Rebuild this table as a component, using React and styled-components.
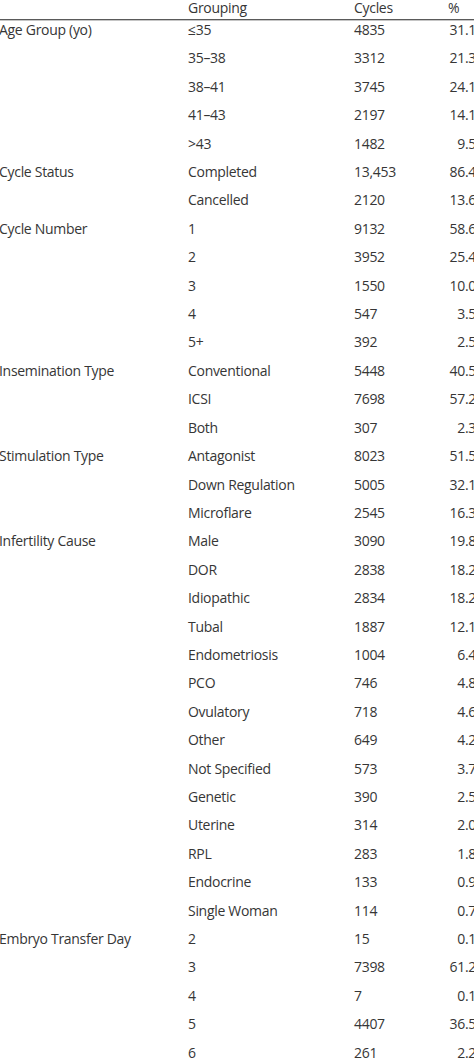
import React from "react";
import styled, { createGlobalStyle } from "styled-components";

const GlobalStyle = createGlobalStyle`
  html, body {
    margin: 0;
    padding: 0;
    background: #ffffff;
    overflow: hidden;
  }
  body {
    font-family: "Open Sans", "Noto Sans", "Liberation Sans", sans-serif;
    color: #363636;
  }
`;

const Table = styled.div`
  width: 476px;
  font-size: 14px;
  letter-spacing: -0.3px;
  font-weight: 400;
`;

const HeaderRow = styled.div`
  display: grid;
  grid-template-columns: 188px 166px 94px 28px;
  height: 19px;
  line-height: 16px;
  border-bottom: 1px solid #5a5a5a;
  box-shadow: 0 0.5px 0 #8a8a8a;
`;

const Row = styled.div`
  display: grid;
  grid-template-columns: 188px 166px 94px 28px;
  height: 28.42px;
  line-height: 20px;
`;

const Cell = styled.div`
  white-space: nowrap;
  text-align: ${(p) => (p.$right ? "right" : "left")};
  margin-left: ${(p) => (p.$label ? "-1px" : "0")};
`;

const groups = [
  ["Age Group (yo)", [["≤35", "4835", "31.1"], ["35–38", "3312", "21.3"], ["38–41", "3745", "24.1"], ["41–43", "2197", "14.1"], [">43", "1482", "9.5"]]],
  ["Cycle Status", [["Completed", "13,453", "86.4"], ["Cancelled", "2120", "13.6"]]],
  ["Cycle Number", [["1", "9132", "58.6"], ["2", "3952", "25.4"], ["3", "1550", "10.0"], ["4", "547", "3.5"], ["5+", "392", "2.5"]]],
  ["Insemination Type", [["Conventional", "5448", "40.5"], ["ICSI", "7698", "57.2"], ["Both", "307", "2.3"]]],
  ["Stimulation Type", [["Antagonist", "8023", "51.5"], ["Down Regulation", "5005", "32.1"], ["Microflare", "2545", "16.3"]]],
  ["Infertility Cause", [["Male", "3090", "19.8"], ["DOR", "2838", "18.2"], ["Idiopathic", "2834", "18.2"], ["Tubal", "1887", "12.1"], ["Endometriosis", "1004", "6.4"], ["PCO", "746", "4.8"], ["Ovulatory", "718", "4.6"], ["Other", "649", "4.2"], ["Not Specified", "573", "3.7"], ["Genetic", "390", "2.5"], ["Uterine", "314", "2.0"], ["RPL", "283", "1.8"], ["Endocrine", "133", "0.9"], ["Single Woman", "114", "0.7"]]],
  ["Embryo Transfer Day", [["2", "15", "0.1"], ["3", "7398", "61.2"], ["4", "7", "0.1"], ["5", "4407", "36.5"], ["6", "261", "2.2"]]],
];

export default function App() {
  return (
    <>
      <GlobalStyle />
      <Table>
        <HeaderRow>
          <Cell />
          <Cell>Grouping</Cell>
          <Cell>Cycles</Cell>
          <Cell>%</Cell>
        </HeaderRow>
        {groups.map(([label, rows]) =>
          rows.map((r, i) => (
            <Row key={label + i}>
              <Cell $label>{i === 0 ? label : ""}</Cell>
              <Cell>{r[0]}</Cell>
              <Cell>{r[1]}</Cell>
              <Cell $right>{r[2]}</Cell>
            </Row>
          ))
        )}
      </Table>
    </>
  );
}
